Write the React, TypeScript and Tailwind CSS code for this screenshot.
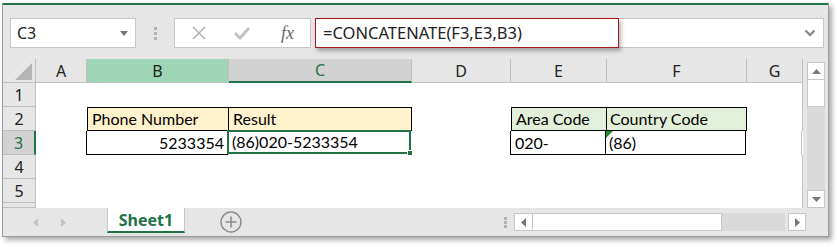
import { ReactNode } from "react"

const cols = [
  { id: "A", w: "w-[51px]" },
  { id: "B", w: "w-[142px]" },
  { id: "C", w: "w-[183px]" },
  { id: "D", w: "w-[99px]" },
  { id: "E", w: "w-[96px]" },
  { id: "F", w: "w-[140px]" },
  { id: "G", w: "w-[56px]" },
]

const cellFont = { fontFamily: "Lato, 'Liberation Sans', sans-serif" }
const uiFont = { fontFamily: "'Noto Sans', 'Open Sans', sans-serif" }

function ColHeader() {
  return (
    <div className="flex h-[24px]" style={uiFont}>
      <div className="relative w-[33px] h-full bg-[#e6e6e6] border-r border-b border-[#c0c0c0]">
        <svg className="absolute left-[12px] top-[4px]" width="18" height="18" viewBox="0 0 18 18">
          <polygon points="0,17 17,17 17,0" fill="#b5b5b5" />
        </svg>
      </div>
      {cols.map((c) => {
        let cls = "bg-[#e6e6e6] border-b border-[#c0c0c0] text-[#222]"
        if (c.id === "B") cls = "bg-[#9fd5b7] border-b border-[#c0c0c0] text-[#222]"
        if (c.id === "C") cls = "bg-[#d2d2d2] border-b-2 border-[#217346] text-[#217346]"
        return (
          <div
            key={c.id}
            className={`${c.w} h-full flex items-center justify-center text-[16px] border-r border-r-[#c0c0c0] ${cls}`}
          >
            {c.id}
          </div>
        )
      })}
    </div>
  )
}

function RowHead({ n, active, h = "h-[24px]" }: { n: string; active?: boolean; h?: string }) {
  return (
    <div
      className={`w-[33px] ${h} shrink-0 flex items-center justify-center text-[16px] border-b border-[#c0c0c0] ${
        active ? "bg-[#d2d2d2] text-[#217346] border-r-2 border-r-[#217346]" : "bg-[#e6e6e6] text-[#222] border-r border-r-[#c0c0c0]"
      }`}
      style={uiFont}
    >
      {n}
    </div>
  )
}

function Cell({ w, className = "", children }: { w: string; className?: string; children?: ReactNode }) {
  return (
    <div className={`${w} h-full shrink-0 flex items-center text-[16px] text-black whitespace-nowrap ${className}`} style={cellFont}>
      {children}
    </div>
  )
}

function Grid() {
  return (
    <div className="w-[800px] h-[149px] overflow-hidden bg-white">
      <ColHeader />
      <div className="flex h-[24px]">
        <RowHead n="1" />
        <div className="flex-1 border-r border-[#c0c0c0]" />
      </div>
      <div className="flex h-[24px]">
        <RowHead n="2" />
        <Cell w="w-[51px]" />
        <Cell w="w-[142px]" className="bg-[#fff2cc] border border-black pl-[4px]">Phone Number</Cell>
        <Cell w="w-[183px]" className="bg-[#fff2cc] border-t border-r border-b border-black pl-[4px]">Result</Cell>
        <Cell w="w-[99px]" />
        <Cell w="w-[96px]" className="bg-[#e2efda] border border-black pl-[4px]">Area Code</Cell>
        <Cell w="w-[140px]" className="bg-[#e2efda] border-t border-r border-b border-black pl-[3px]">Country Code</Cell>
        <Cell w="w-[56px]" className="border-r border-[#c0c0c0]" />
      </div>
      <div className="flex h-[24px]">
        <RowHead n="3" active />
        <Cell w="w-[50px]" />
        <Cell w="w-[142px]" className="border-l border-r border-b border-black justify-end pr-[3px]">5233354</Cell>
        <Cell w="w-[184px]" className="relative border-2 border-[#217346] -ml-[1px] -mt-[1px] h-[25px] pl-[3px]">
          (86)020-5233354
          <span className="absolute -right-[4px] -bottom-[4px] w-[6px] h-[6px] bg-[#217346] border border-white" />
        </Cell>
        <Cell w="w-[99px]" />
        <Cell w="w-[96px]" className="border-l border-r border-b border-black pl-[4px]">020-</Cell>
        <Cell w="w-[140px]" className="relative border-r border-b border-black pl-[3px]">
          <svg className="absolute left-0 top-0" width="7" height="7" viewBox="0 0 7 7">
            <polygon points="0,0 7,0 0,7" fill="#1f8a1f" />
          </svg>
          (86)
        </Cell>
        <Cell w="w-[56px]" className="border-r border-[#c0c0c0]" />
      </div>
      <div className="flex h-[24px]">
        <RowHead n="4" />
        <div className="flex-1 border-r border-[#c0c0c0]" />
      </div>
      <div className="flex h-[24px]">
        <RowHead n="5" />
        <div className="flex-1 border-r border-[#c0c0c0]" />
      </div>
      <div className="flex h-[5px]">
        <RowHead n="" h="h-[5px]" />
        <div className="flex-1 border-r border-[#c0c0c0]" />
      </div>
    </div>
  )
}

function VScroll() {
  return (
    <div className="w-[24px] h-[149px] bg-[#e6e6e6] flex flex-col items-center pt-[3px] pl-[2px]">
      <div className="w-[18px] h-[18px] bg-white border border-[#c6c6c6] flex items-center justify-center">
        <svg width="9" height="5" viewBox="0 0 9 5"><polygon points="0,5 9,5 4.5,0" fill="#777" /></svg>
      </div>
      <div className="w-[18px] h-[27px] bg-white border border-[#c6c6c6] border-t-0" />
      <div className="w-[18px] flex-1 bg-[#dadada]" />
      <div className="w-[18px] h-[18px] bg-white border border-[#c6c6c6] flex items-center justify-center">
        <svg width="9" height="5" viewBox="0 0 9 5"><polygon points="0,0 9,0 4.5,5" fill="#777" /></svg>
      </div>
    </div>
  )
}

function FormulaBar() {
  return (
    <div className="h-[54px] bg-[#e6e6e6] flex items-start pt-[13px] pl-[7px]" style={uiFont}>
      <div className="w-[126px] h-[30px] bg-white border border-[#c6c6c6] flex items-center justify-between pl-[6px] pr-[7px] text-[16px] text-[#222]">
        C3
        <svg width="8" height="5" viewBox="0 0 8 5"><polygon points="0,0 8,0 4,5" fill="#777" /></svg>
      </div>
      <div className="w-[38px] h-[30px] flex flex-col items-center justify-center gap-[2px] pl-[1px]">
        <span className="w-[3px] h-[3px] bg-[#b3b3b3]" />
        <span className="w-[3px] h-[3px] bg-[#b3b3b3]" />
        <span className="w-[3px] h-[3px] bg-[#b3b3b3]" />
      </div>
      <div className="w-[137px] h-[30px] bg-white border border-[#c6c6c6] flex items-center">
        <svg className="ml-[16px]" width="16" height="16" viewBox="0 0 16 16">
          <path d="M2 2 L14 14 M14 2 L2 14" stroke="#b3b3b3" strokeWidth="1.6" />
        </svg>
        <svg className="ml-[26px]" width="18" height="16" viewBox="0 0 18 16">
          <path d="M2 8 L7 13 L16 3" stroke="#c2c2c2" strokeWidth="3" fill="none" />
        </svg>
        <span className="ml-[30px] text-[18px] italic text-[#666]" style={{ fontFamily: "'Liberation Serif', serif" }}>
          fx
        </span>
      </div>
      <div className="relative ml-[4px] w-[509px] h-[30px] bg-white border border-[#c6c6c6] flex items-center justify-end pr-[7px]">
        <div className="absolute -left-[1px] -top-[1px] w-[304px] h-[30px] border-[1.5px] border-[#a3191b] shadow-[2px_3px_4px_rgba(0,0,0,0.3)] flex items-center pl-[7px] text-[16.5px] text-[#222] bg-white">
          =CONCATENATE(F3,E3,B3)
        </div>
        <svg width="12" height="8" viewBox="0 0 12 8"><path d="M1.5 1.5 L6 6 L10.5 1.5" stroke="#8a8a8a" strokeWidth="2.4" fill="none" /></svg>
      </div>
    </div>
  )
}

function BottomBar() {
  return (
    <div className="h-[28px] bg-[#e6e6e6] flex items-start" style={uiFont}>
      <div className="w-[104px] h-[28px] flex items-center pl-[30px] gap-[23px]">
        <svg width="5" height="9" viewBox="0 0 5 9"><polygon points="5,0 5,9 0,4.5" fill="#c4c4c4" /></svg>
        <svg width="5" height="9" viewBox="0 0 5 9"><polygon points="0,0 0,9 5,4.5" fill="#c4c4c4" /></svg>
      </div>
      <div className="w-[78px] h-[25px] bg-white border-x border-[#c6c6c6] border-b-2 border-b-[#217346] flex items-center justify-center font-bold text-[16px] text-[#217346]">
        Sheet1
      </div>
      <div className="w-[312px] h-[28px] flex items-center pl-[35px]">
        <svg width="22" height="22" viewBox="0 0 22 22">
          <circle cx="11" cy="11" r="10" stroke="#8c8c8c" strokeWidth="1.4" fill="none" />
          <path d="M11 5.5 V16.5 M5.5 11 H16.5" stroke="#8c8c8c" strokeWidth="1.6" />
        </svg>
      </div>
      <div className="w-[17px] h-[28px] flex flex-col items-center justify-center gap-[1px]">
        <span className="w-[3px] h-[3px] bg-[#b3b3b3]" />
        <span className="w-[3px] h-[3px] bg-[#b3b3b3]" />
        <span className="w-[3px] h-[3px] bg-[#b3b3b3]" />
      </div>
      <div className="flex items-start pt-[5px]">
        <div className="w-[19px] h-[18px] bg-white border border-[#c6c6c6] flex items-center justify-center">
          <svg width="5" height="9" viewBox="0 0 5 9"><polygon points="5,0 5,9 0,4.5" fill="#777" /></svg>
        </div>
        <div className="w-[189px] h-[18px] bg-white border border-l-0 border-[#c6c6c6]" />
        <div className="w-[63px] h-[18px] bg-[#dadada]" />
        <div className="ml-[3px] w-[18px] h-[18px] bg-white border border-[#c6c6c6] flex items-center justify-center">
          <svg width="5" height="9" viewBox="0 0 5 9"><polygon points="0,0 0,9 5,4.5" fill="#777" /></svg>
        </div>
      </div>
    </div>
  )
}

export default function App() {
  return (
    <div className="w-[837px] h-[247px] bg-white pt-[3px] pl-[2px]">
      <div className="w-[827px] h-[234px] flex flex-col border-x border-b border-[#9c9c9c] bg-[#e6e6e6] shadow-[3px_3px_5px_rgba(0,0,0,0.35)]">
        <div className="h-[2px] bg-[#217346]" />
        <FormulaBar />
        <div className="flex border-t border-[#e6e6e6] -mt-[1px]">
          <Grid />
          <VScroll />
        </div>
        <BottomBar />
      </div>
    </div>
  )
}
